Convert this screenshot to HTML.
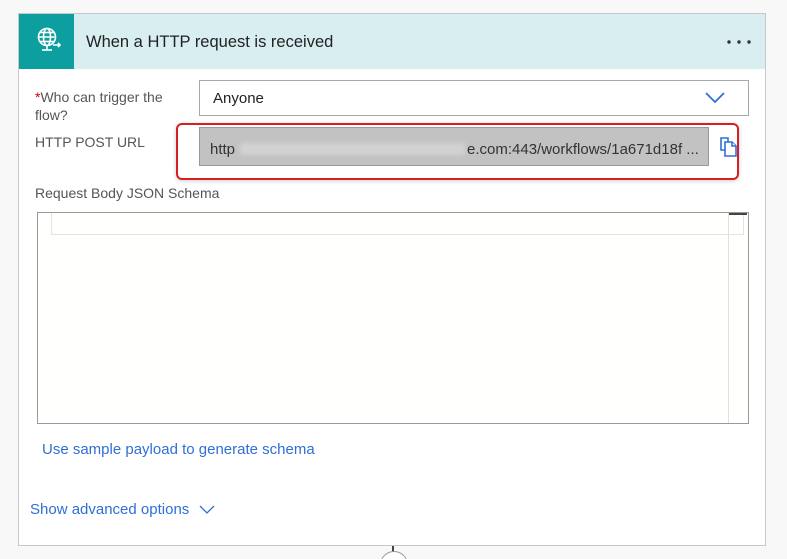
<!DOCTYPE html>
<html><head><style>
html,body{margin:0;width:787px;height:559px;overflow:hidden}
body{background:#f8f8f8;font-family:"Liberation Sans",sans-serif;position:relative}
.a{position:absolute}
.card{left:18px;top:13px;width:748px;height:533px;background:#fff;border:1px solid #c8c8c8;box-sizing:border-box}
.lbl{font-size:14px;color:#555}
.link{font-size:15px;color:#2f6fd6}
</style></head><body>
<div class="a card"></div>
<div class="a" style="left:19px;top:14px;width:746px;height:55px;background:#d8eef0"></div>
<div class="a" style="left:19px;top:14px;width:55px;height:55px;background:#0d9f9f"></div>
<svg class="a" style="left:34px;top:26px" width="30" height="30" viewBox="0 0 30 30" fill="none" stroke="#fff" stroke-width="1.6">
<circle cx="13" cy="11" r="8.5"/><ellipse cx="13" cy="11" rx="3.5" ry="8.5"/><line x1="4.5" y1="11" x2="21.5" y2="11"/><line x1="6" y1="6.5" x2="20" y2="6.5"/><line x1="6" y1="15.5" x2="20" y2="15.5"/>
<line x1="13" y1="19.5" x2="13" y2="24"/><line x1="8" y1="24" x2="18" y2="24"/><path d="M19 19h7M24 17l2 2-2 2"/></svg>
<div class="a" style="left:86px;top:33px;font-size:16.5px;color:#222">When a HTTP request is received</div>
<svg class="a" style="left:726px;top:38px" width="26" height="8"><circle cx="3" cy="4" r="1.7" fill="#333"/><circle cx="13" cy="4" r="1.7" fill="#333"/><circle cx="23" cy="4" r="1.7" fill="#333"/></svg>
<div class="a lbl" style="left:35px;top:88px;line-height:18px"><span style="color:#c00">*</span>Who can trigger the<br>flow?</div>
<div class="a" style="left:199px;top:80px;width:550px;height:36px;border:1px solid #a8a8a8;box-sizing:border-box"></div>
<div class="a" style="left:213px;top:90px;font-size:15px;color:#222">Anyone</div>
<svg class="a" style="left:705px;top:92px" width="20" height="12"><path d="M1 1l9 9 9-9" stroke="#2f6fd6" stroke-width="1.8" fill="none"/></svg>
<div class="a lbl" style="left:35px;top:134px">HTTP POST URL</div>
<div class="a" style="left:176px;top:123px;width:563px;height:57px;border:2px solid #d42020;border-radius:6px;box-sizing:border-box;box-shadow:0 1px 4px rgba(0,0,0,.2)"></div>
<div class="a" style="left:199px;top:127px;width:510px;height:39px;background:#c2c2c2;border:1px solid #999;box-sizing:border-box"></div>
<div class="a" style="left:210px;top:141px;font-size:15px;color:#333">http</div>
<div class="a" style="left:240px;top:143px;width:225px;height:12px;background:#d2d2d2;filter:blur(2px)"></div>
<div class="a" style="left:467px;top:141px;font-size:15px;color:#333">e.com:443/workflows/1a671d18f ...</div>
<svg class="a" style="left:719px;top:136px" width="20" height="22" fill="#fff" stroke="#2f6fd6" stroke-width="1.6"><path d="M2 2h7v12H2z"/><path d="M6 6h7l4 4v10H6z"/><path d="M13 6v4h4"/></svg>
<div class="a lbl" style="left:35px;top:185px">Request Body JSON Schema</div>
<div class="a" style="left:37px;top:212px;width:712px;height:212px;border:1px solid #999;box-sizing:border-box;background:#fffffd"></div>
<div class="a" style="left:51px;top:213px;width:693px;height:22px;border:1px solid #e4e4e4;border-top:none;box-sizing:border-box"></div>
<div class="a" style="left:728px;top:213px;width:1px;height:210px;background:#e0e0e0"></div>
<div class="a" style="left:729px;top:213px;width:18px;height:2px;background:#444"></div>
<div class="a link" style="left:42px;top:441px">Use sample payload to generate schema</div>
<div class="a link" style="left:30px;top:501px">Show advanced options</div>
<svg class="a" style="left:199px;top:505px" width="16" height="10"><path d="M1 1l7 7 7-7" stroke="#2f6fd6" stroke-width="1.3" fill="none"/></svg>
<div class="a" style="left:392px;top:546px;width:2px;height:6px;background:#444"></div>
<div class="a" style="left:380px;top:551px;width:26px;height:26px;border:1px solid #999;border-radius:50%;background:#fff"></div>
</body></html>
